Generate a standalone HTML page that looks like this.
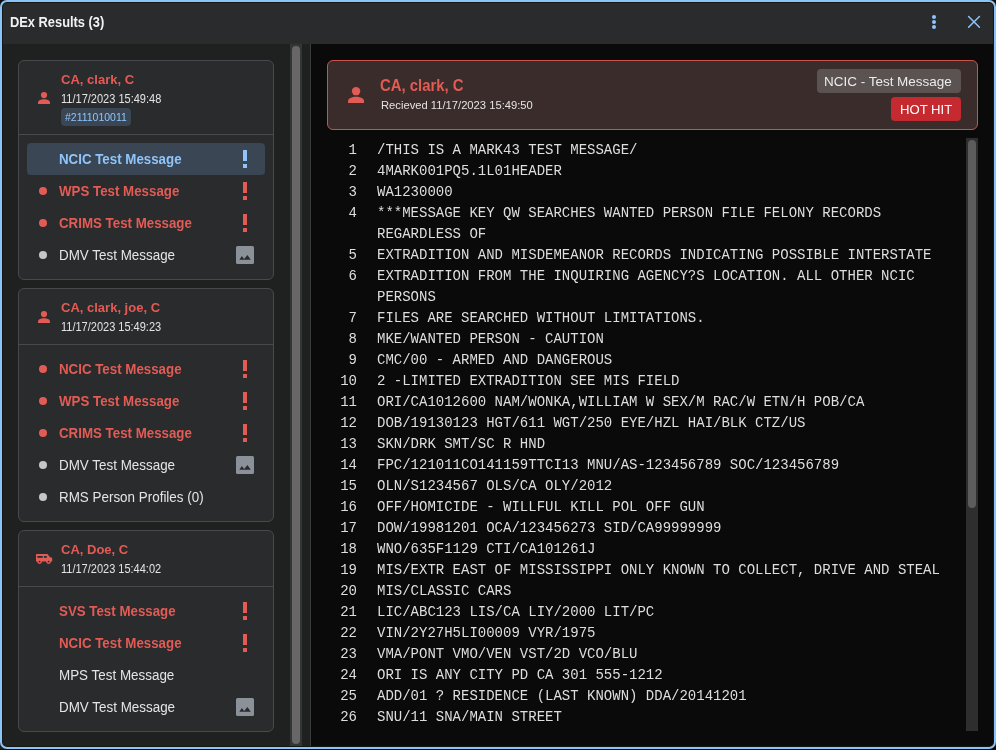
<!DOCTYPE html>
<html><head><meta charset="utf-8"><title>DEx Results</title><style>
html,body{margin:0;padding:0;width:996px;height:750px;overflow:hidden;background:#101820}
.a{position:absolute;}
.t{position:absolute;white-space:pre;line-height:20px;font-family:"Liberation Sans", sans-serif;transform-origin:0 0}
.m{font-family:"Liberation Mono", monospace;font-size:14px;line-height:21px;color:#dedede}
.n{left:316px;width:41px;text-align:right}
svg{display:block}
</style></head>
<body><div id="root" style="position:absolute;left:0;top:0;width:996px;height:750px;will-change:transform">
<div class="a" style="left:0px;top:0px;width:996px;height:750px;background:#0b0f14;"></div>
<div class="a" style="left:0;top:0;width:996px;height:749px;border-radius:6px;background:#1f2120"></div>
<div class="a" style="left:0;top:0;width:996px;height:44px;border-radius:6px 6px 0 0;background:#2a2b2d"></div>
<div class="t" style="left:10.20px;top:12.11px;font-size:14.099px;color:#f2f2f2;font-weight:bold;transform:scaleX(0.9130)">DEx Results (3)</div>
<div class="a" style="left:932px;top:15.2px;width:4px;height:4px;border-radius:50%;background:#8fc5fa;"></div>
<div class="a" style="left:932px;top:20.2px;width:4px;height:4px;border-radius:50%;background:#8fc5fa;"></div>
<div class="a" style="left:932px;top:25.3px;width:4px;height:4px;border-radius:50%;background:#8fc5fa;"></div>
<svg class="a" style="left:966px;top:14px" width="16" height="16" viewBox="0 0 16 16"><path d="M2.6 2.5 L13.4 13.3 M13.4 2.5 L2.6 13.3" stroke="#8fc5fa" stroke-width="1.5" stroke-linecap="round"/></svg>
<div class="a" style="left:0px;top:44px;width:310px;height:705px;background:#1f2120;"></div>
<div class="a" style="left:310px;top:44px;width:1px;height:705px;background:#3a3b3b;"></div>
<div class="a" style="left:290px;top:44px;width:12px;height:705px;background:#343636;"></div>
<div class="a" style="left:292px;top:46px;width:8px;height:698px;border-radius:4px;background:#676767;"></div>
<div class="a" style="left:311px;top:44px;width:685px;height:705px;background:#0a0a0a;"></div>
<div class="a" style="left:18px;top:60px;width:256px;height:220px;box-sizing:border-box;border:1px solid #48494c;border-radius:6px;background:#2a2b2d"></div>
<div class="a" style="left:19px;top:134px;width:254px;height:1px;background:#48494c;"></div>
<svg class="a" style="left:38px;top:92px" width="12" height="12" viewBox="0 0 12 12"><circle cx="6" cy="3.1" r="3.1" fill="#e35b55"/><path d="M0 12 L0 10.6 C0 8.4 3 7.2 6 7.2 C9 7.2 12 8.4 12 10.6 L12 12 Z" fill="#e35b55"/></svg>
<div class="t" style="left:60.80px;top:69.56px;font-size:13.372px;color:#e35b55;font-weight:bold;transform:scaleX(0.9747)">CA, clark, C</div>
<div class="t" style="left:60.50px;top:88.82px;font-size:12.064px;color:#e4e4e4;font-weight:normal;transform:scaleX(0.9148)">11/17/2023 15:49:48</div>
<div class="a" style="left:61px;top:108px;width:70px;height:18px;border-radius:4px;background:#3a4654;"></div>
<div class="t" style="left:64.70px;top:106.97px;font-size:11.628px;color:#8fc5fa;font-weight:normal;transform:scaleX(0.9030)">#2111010011</div>
<div class="a" style="left:27px;top:143px;width:238px;height:32px;border-radius:4px;background:#3a4654;"></div>
<div class="t" style="left:59.00px;top:148.96px;font-size:14.535px;color:#8fc5fa;font-weight:bold;transform:scaleX(0.9169)">NCIC Test Message</div>
<div class="a" style="left:243px;top:150px;width:4px;height:11px;background:#8fc5fa;"></div>
<div class="a" style="left:243px;top:164px;width:4px;height:4px;background:#8fc5fa;"></div>
<div class="a" style="left:39px;top:187px;width:8px;height:8px;border-radius:50%;background:#e35b55;"></div>
<div class="t" style="left:59.00px;top:180.96px;font-size:14.535px;color:#e35b55;font-weight:bold;transform:scaleX(0.9169)">WPS Test Message</div>
<div class="a" style="left:243px;top:182px;width:4px;height:11px;background:#e35b55;"></div>
<div class="a" style="left:243px;top:196px;width:4px;height:4px;background:#e35b55;"></div>
<div class="a" style="left:39px;top:219px;width:8px;height:8px;border-radius:50%;background:#e35b55;"></div>
<div class="t" style="left:59.00px;top:212.96px;font-size:14.535px;color:#e35b55;font-weight:bold;transform:scaleX(0.9169)">CRIMS Test Message</div>
<div class="a" style="left:243px;top:214px;width:4px;height:11px;background:#e35b55;"></div>
<div class="a" style="left:243px;top:228px;width:4px;height:4px;background:#e35b55;"></div>
<div class="a" style="left:39px;top:251px;width:8px;height:8px;border-radius:50%;background:#c6c6c6;"></div>
<div class="t" style="left:59.00px;top:244.96px;font-size:14.535px;color:#e4e4e4;font-weight:normal;transform:scaleX(0.9242)">DMV Test Message</div>
<svg class="a" style="left:236px;top:246px" width="18" height="18" viewBox="0 0 18 18"><rect x="0" y="0" width="18" height="18" rx="1.5" fill="#8a9199"/><path d="M3.4 13.8 L5.8 10 L8.2 12.9 L11.4 9 L14.8 13.8 Z" fill="#2a2b2d"/></svg>
<div class="a" style="left:18px;top:288px;width:256px;height:234px;box-sizing:border-box;border:1px solid #48494c;border-radius:6px;background:#2a2b2d"></div>
<div class="a" style="left:19px;top:344px;width:254px;height:1px;background:#48494c;"></div>
<svg class="a" style="left:38px;top:311px" width="12" height="12" viewBox="0 0 12 12"><circle cx="6" cy="3.1" r="3.1" fill="#e35b55"/><path d="M0 12 L0 10.6 C0 8.4 3 7.2 6 7.2 C9 7.2 12 8.4 12 10.6 L12 12 Z" fill="#e35b55"/></svg>
<div class="t" style="left:60.80px;top:297.66px;font-size:13.372px;color:#e35b55;font-weight:bold;transform:scaleX(0.9735)">CA, clark, joe, C</div>
<div class="t" style="left:60.50px;top:316.82px;font-size:12.064px;color:#e4e4e4;font-weight:normal;transform:scaleX(0.9136)">11/17/2023 15:49:23</div>
<div class="a" style="left:39px;top:365px;width:8px;height:8px;border-radius:50%;background:#e35b55;"></div>
<div class="t" style="left:59.00px;top:358.96px;font-size:14.535px;color:#e35b55;font-weight:bold;transform:scaleX(0.9169)">NCIC Test Message</div>
<div class="a" style="left:243px;top:360px;width:4px;height:11px;background:#e35b55;"></div>
<div class="a" style="left:243px;top:374px;width:4px;height:4px;background:#e35b55;"></div>
<div class="a" style="left:39px;top:397px;width:8px;height:8px;border-radius:50%;background:#e35b55;"></div>
<div class="t" style="left:59.00px;top:390.96px;font-size:14.535px;color:#e35b55;font-weight:bold;transform:scaleX(0.9169)">WPS Test Message</div>
<div class="a" style="left:243px;top:392px;width:4px;height:11px;background:#e35b55;"></div>
<div class="a" style="left:243px;top:406px;width:4px;height:4px;background:#e35b55;"></div>
<div class="a" style="left:39px;top:429px;width:8px;height:8px;border-radius:50%;background:#e35b55;"></div>
<div class="t" style="left:59.00px;top:422.96px;font-size:14.535px;color:#e35b55;font-weight:bold;transform:scaleX(0.9169)">CRIMS Test Message</div>
<div class="a" style="left:243px;top:424px;width:4px;height:11px;background:#e35b55;"></div>
<div class="a" style="left:243px;top:438px;width:4px;height:4px;background:#e35b55;"></div>
<div class="a" style="left:39px;top:461px;width:8px;height:8px;border-radius:50%;background:#c6c6c6;"></div>
<div class="t" style="left:59.00px;top:454.96px;font-size:14.535px;color:#e4e4e4;font-weight:normal;transform:scaleX(0.9242)">DMV Test Message</div>
<svg class="a" style="left:236px;top:456px" width="18" height="18" viewBox="0 0 18 18"><rect x="0" y="0" width="18" height="18" rx="1.5" fill="#8a9199"/><path d="M3.4 13.8 L5.8 10 L8.2 12.9 L11.4 9 L14.8 13.8 Z" fill="#2a2b2d"/></svg>
<div class="a" style="left:39px;top:493px;width:8px;height:8px;border-radius:50%;background:#c6c6c6;"></div>
<div class="t" style="left:59.00px;top:486.96px;font-size:14.535px;color:#e4e4e4;font-weight:normal;transform:scaleX(0.9242)">RMS Person Profiles (0)</div>
<div class="a" style="left:18px;top:530px;width:256px;height:202px;box-sizing:border-box;border:1px solid #48494c;border-radius:6px;background:#2a2b2d"></div>
<div class="a" style="left:19px;top:586px;width:254px;height:1px;background:#48494c;"></div>
<svg class="a" style="left:35px;top:553px" width="18" height="12" viewBox="0 0 18 12"><path d="M1 1.2 Q1 1 1.3 1 L12.5 1 L15 4.2 L16.6 4.6 Q17.2 4.8 17.2 5.4 L17.2 8 Q17.2 8.4 16.8 8.4 L1.4 8.4 Q1 8.4 1 8 Z" fill="#e35b55"/><rect x="2.4" y="3" width="5.4" height="1.8" fill="#2a2b2d"/><rect x="9" y="3" width="2.8" height="1.8" fill="#2a2b2d"/><circle cx="4.6" cy="8.6" r="2.4" fill="#e35b55"/><circle cx="13.6" cy="8.6" r="2.4" fill="#e35b55"/><circle cx="4.6" cy="8.6" r="0.9" fill="#2a2b2d"/><circle cx="13.6" cy="8.6" r="0.9" fill="#2a2b2d"/></svg>
<div class="t" style="left:60.80px;top:539.56px;font-size:13.372px;color:#e35b55;font-weight:bold;transform:scaleX(0.9735)">CA, Doe, C</div>
<div class="t" style="left:60.50px;top:558.82px;font-size:12.064px;color:#e4e4e4;font-weight:normal;transform:scaleX(0.9136)">11/17/2023 15:44:02</div>
<div class="t" style="left:59.00px;top:600.96px;font-size:14.535px;color:#e35b55;font-weight:bold;transform:scaleX(0.9169)">SVS Test Message</div>
<div class="a" style="left:243px;top:602px;width:4px;height:11px;background:#e35b55;"></div>
<div class="a" style="left:243px;top:616px;width:4px;height:4px;background:#e35b55;"></div>
<div class="t" style="left:59.00px;top:632.96px;font-size:14.535px;color:#e35b55;font-weight:bold;transform:scaleX(0.9169)">NCIC Test Message</div>
<div class="a" style="left:243px;top:634px;width:4px;height:11px;background:#e35b55;"></div>
<div class="a" style="left:243px;top:648px;width:4px;height:4px;background:#e35b55;"></div>
<div class="t" style="left:59.00px;top:664.96px;font-size:14.535px;color:#e4e4e4;font-weight:normal;transform:scaleX(0.9242)">MPS Test Message</div>
<div class="t" style="left:59.00px;top:696.96px;font-size:14.535px;color:#e4e4e4;font-weight:normal;transform:scaleX(0.9242)">DMV Test Message</div>
<svg class="a" style="left:236px;top:698px" width="18" height="18" viewBox="0 0 18 18"><rect x="0" y="0" width="18" height="18" rx="1.5" fill="#8a9199"/><path d="M3.4 13.8 L5.8 10 L8.2 12.9 L11.4 9 L14.8 13.8 Z" fill="#2a2b2d"/></svg>
<div class="a" style="left:327px;top:60px;width:651px;height:70px;box-sizing:border-box;border:1px solid #c9544e;border-radius:6px;background:#3a2c2b"></div>
<svg class="a" style="left:348px;top:86.8px" width="16.2" height="16.2" viewBox="0 0 12 12"><circle cx="6" cy="3.1" r="3.1" fill="#e35b55"/><path d="M0 12 L0 10.6 C0 8.4 3 7.2 6 7.2 C9 7.2 12 8.4 12 10.6 L12 12 Z" fill="#e35b55"/></svg>
<div class="t" style="left:380.00px;top:75.66px;font-size:15.698px;color:#e35b55;font-weight:bold;transform:scaleX(0.9493)">CA, clark, C</div>
<div class="t" style="left:380.50px;top:94.77px;font-size:11.047px;color:#e4e4e4;font-weight:normal;transform:scaleX(1.0157)">Recieved 11/17/2023 15:49:50</div>
<div class="a" style="left:817px;top:69px;width:144px;height:24px;border-radius:4px;background:#5b5352;"></div>
<div class="t" style="left:824.30px;top:71.76px;font-size:13.372px;color:#ebebeb;font-weight:normal;transform:scaleX(1.0085)">NCIC - Test Message</div>
<div class="a" style="left:891px;top:97px;width:70px;height:24px;border-radius:4px;background:#c42a2f;"></div>
<div class="t" style="left:899.50px;top:99.81px;font-size:13.517px;color:#ffffff;font-weight:normal;transform:scaleX(0.9712)">HOT HIT</div>
<div class="t m n" style="top:140.37px">1</div>
<div class="t m" style="left:377px;top:140.37px">/THIS IS A MARK43 TEST MESSAGE/</div>
<div class="t m n" style="top:161.37px">2</div>
<div class="t m" style="left:377px;top:161.37px">4MARK001PQ5.1L01HEADER</div>
<div class="t m n" style="top:182.37px">3</div>
<div class="t m" style="left:377px;top:182.37px">WA1230000</div>
<div class="t m n" style="top:203.37px">4</div>
<div class="t m" style="left:377px;top:203.37px">***MESSAGE KEY QW SEARCHES WANTED PERSON FILE FELONY RECORDS</div>
<div class="t m" style="left:377px;top:224.37px">REGARDLESS OF</div>
<div class="t m n" style="top:245.37px">5</div>
<div class="t m" style="left:377px;top:245.37px">EXTRADITION AND MISDEMEANOR RECORDS INDICATING POSSIBLE INTERSTATE</div>
<div class="t m n" style="top:266.37px">6</div>
<div class="t m" style="left:377px;top:266.37px">EXTRADITION FROM THE INQUIRING AGENCY?S LOCATION. ALL OTHER NCIC</div>
<div class="t m" style="left:377px;top:287.37px">PERSONS</div>
<div class="t m n" style="top:308.37px">7</div>
<div class="t m" style="left:377px;top:308.37px">FILES ARE SEARCHED WITHOUT LIMITATIONS.</div>
<div class="t m n" style="top:329.37px">8</div>
<div class="t m" style="left:377px;top:329.37px">MKE/WANTED PERSON - CAUTION</div>
<div class="t m n" style="top:350.37px">9</div>
<div class="t m" style="left:377px;top:350.37px">CMC/00 - ARMED AND DANGEROUS</div>
<div class="t m n" style="top:371.37px">10</div>
<div class="t m" style="left:377px;top:371.37px">2 -LIMITED EXTRADITION SEE MIS FIELD</div>
<div class="t m n" style="top:392.37px">11</div>
<div class="t m" style="left:377px;top:392.37px">ORI/CA1012600 NAM/WONKA,WILLIAM W SEX/M RAC/W ETN/H POB/CA</div>
<div class="t m n" style="top:413.37px">12</div>
<div class="t m" style="left:377px;top:413.37px">DOB/19130123 HGT/611 WGT/250 EYE/HZL HAI/BLK CTZ/US</div>
<div class="t m n" style="top:434.37px">13</div>
<div class="t m" style="left:377px;top:434.37px">SKN/DRK SMT/SC R HND</div>
<div class="t m n" style="top:455.37px">14</div>
<div class="t m" style="left:377px;top:455.37px">FPC/121011CO141159TTCI13 MNU/AS-123456789 SOC/123456789</div>
<div class="t m n" style="top:476.37px">15</div>
<div class="t m" style="left:377px;top:476.37px">OLN/S1234567 OLS/CA OLY/2012</div>
<div class="t m n" style="top:497.37px">16</div>
<div class="t m" style="left:377px;top:497.37px">OFF/HOMICIDE - WILLFUL KILL POL OFF GUN</div>
<div class="t m n" style="top:518.37px">17</div>
<div class="t m" style="left:377px;top:518.37px">DOW/19981201 OCA/123456273 SID/CA99999999</div>
<div class="t m n" style="top:539.37px">18</div>
<div class="t m" style="left:377px;top:539.37px">WNO/635F1129 CTI/CA101261J</div>
<div class="t m n" style="top:560.37px">19</div>
<div class="t m" style="left:377px;top:560.37px">MIS/EXTR EAST OF MISSISSIPPI ONLY KNOWN TO COLLECT, DRIVE AND STEAL</div>
<div class="t m n" style="top:581.37px">20</div>
<div class="t m" style="left:377px;top:581.37px">MIS/CLASSIC CARS</div>
<div class="t m n" style="top:602.37px">21</div>
<div class="t m" style="left:377px;top:602.37px">LIC/ABC123 LIS/CA LIY/2000 LIT/PC</div>
<div class="t m n" style="top:623.37px">22</div>
<div class="t m" style="left:377px;top:623.37px">VIN/2Y27H5LI00009 VYR/1975</div>
<div class="t m n" style="top:644.37px">23</div>
<div class="t m" style="left:377px;top:644.37px">VMA/PONT VMO/VEN VST/2D VCO/BLU</div>
<div class="t m n" style="top:665.37px">24</div>
<div class="t m" style="left:377px;top:665.37px">ORI IS ANY CITY PD CA 301 555-1212</div>
<div class="t m n" style="top:686.37px">25</div>
<div class="t m" style="left:377px;top:686.37px">ADD/01 ? RESIDENCE (LAST KNOWN) DDA/20141201</div>
<div class="t m n" style="top:707.37px">26</div>
<div class="t m" style="left:377px;top:707.37px">SNU/11 SNA/MAIN STREET</div>
<div class="a" style="left:966px;top:138px;width:12px;height:593px;background:#2e2e2e;"></div>
<div class="a" style="left:968px;top:140px;width:8px;height:368px;border-radius:4px;background:#5c5c5c;"></div>
<div class="a" style="left:2px;top:2px;width:992px;height:745px;box-sizing:border-box;border:1px solid #161717;border-radius:5px"></div>
<div class="a" style="left:0;top:0;width:996px;height:749px;box-sizing:border-box;border:2px solid #8cc3f8;border-radius:7px"></div>
</div></body></html>
